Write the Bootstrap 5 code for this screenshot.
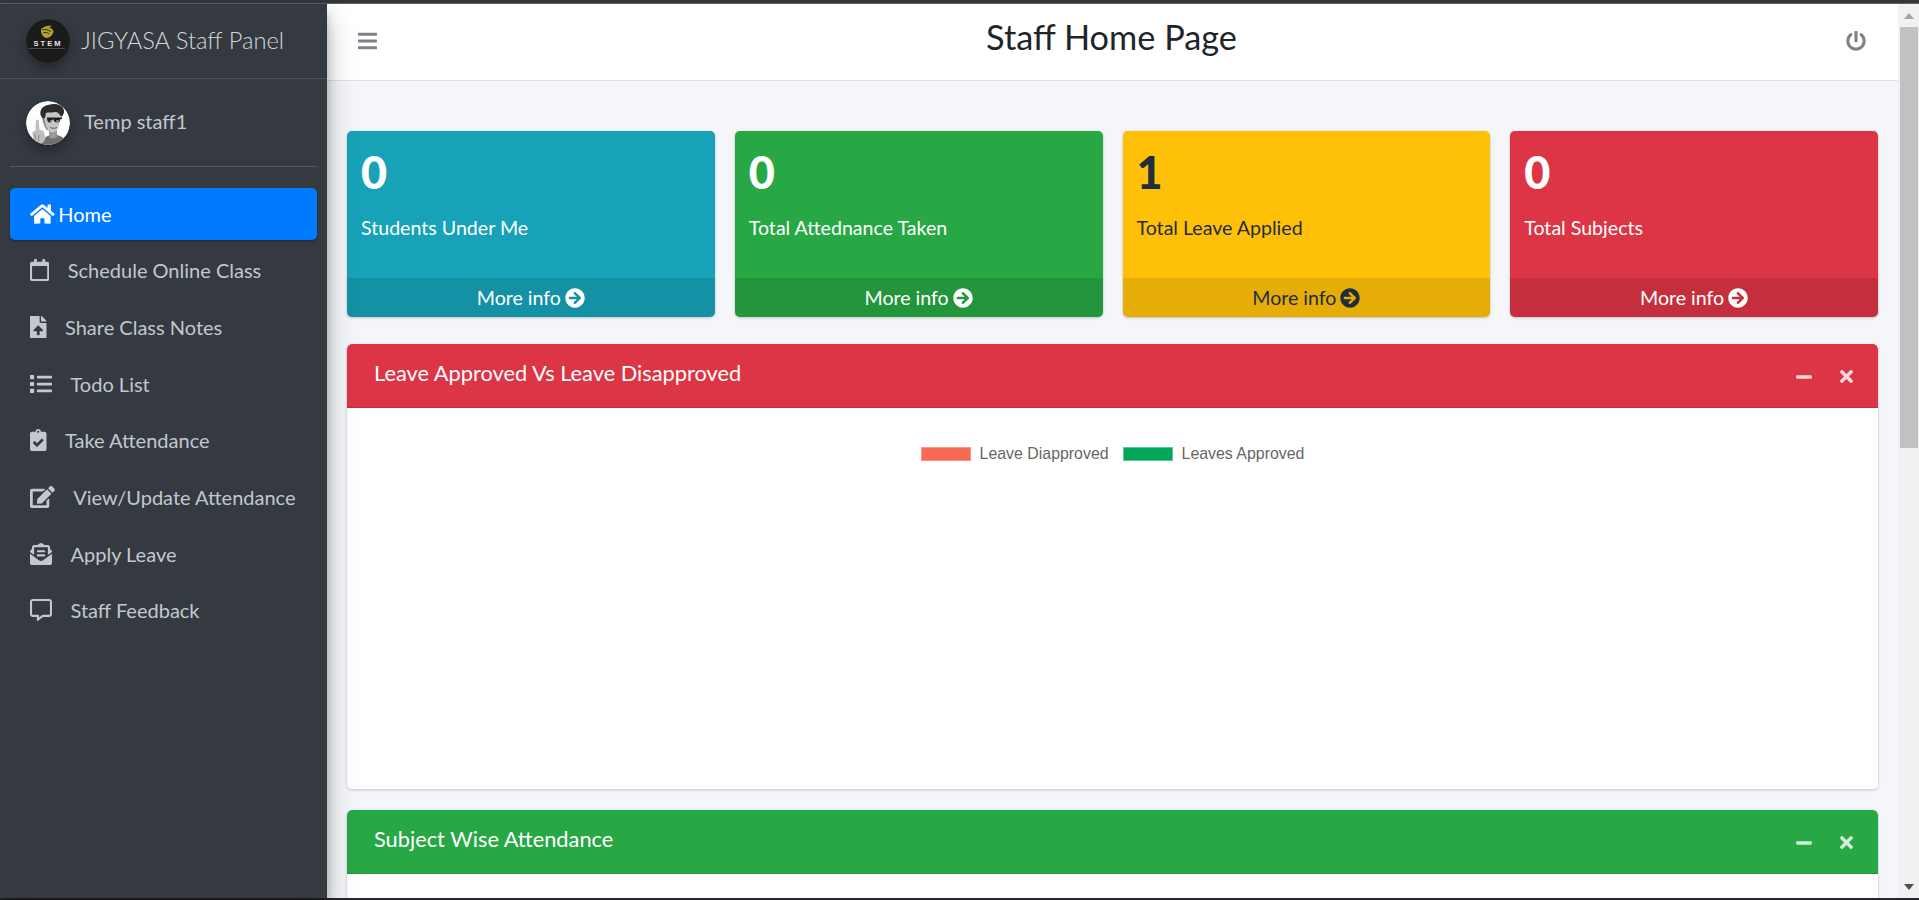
<!DOCTYPE html>
<html lang="en">
  <head>
    <meta charset="UTF-8" />
    <meta name="viewport" content="width=device-width, initial-scale=1.0" />
    <title>Staff Home Page</title>
    <link rel="stylesheet" href="https://cdn.jsdelivr.net/npm/bootstrap@5.3.0/dist/css/bootstrap.min.css" />
    <style>
      html, body { height: 100%; }
      body {
        font-family: "Lato", "Noto Sans", sans-serif;
        background: #f4f6f9;
        color: #212529;
        overflow: hidden;
      }
      .win-top { height: 3px; background: #33363b; border-bottom: 1px solid #5c5f63; box-sizing: content-box; flex: none; }
      .win-bottom { height: 2px; background: #26282b; flex: none; }
      .win-body { min-height: 0; }

      /* sidebar */
      .side {
        width: 327px; flex: none; background: #343a40; position: relative; z-index: 5;
        box-shadow: 0 14px 28px rgba(0,0,0,.25), 0 10px 10px rgba(0,0,0,.22);
      }
      .side-brand { height: 75px; padding-left: 26px; border-bottom: 1px solid #4b545c; }
      .side-brand-text { font-size: 23.7px; font-weight: 300; color: rgba(255,255,255,.8); margin-left: 11px; }
      .logo-round { width: 44px; height: 44px; flex: none; border-radius: 50%; box-shadow: 0 6px 12px rgba(0,0,0,.3); }
      .side-user { height: 88px; margin: 0 10px; padding-left: 16px; border-bottom: 1px solid #4f5962; }
      .side-user-name { font-size: 20px; color: #c2c7d0; margin: 0 0 4px 14px; }
      .side-nav { padding: 21px 10px 0; gap: 4.7px; --bs-nav-pills-border-radius: 5px; --bs-nav-pills-link-active-bg: #007bff; }
      .side-link {
        height: 52px; padding: 0 0 1px 20px; color: #c2c7d0; font-size: 20px;
        display: flex; align-items: center; gap: 18.5px;
      }
      .side-link:hover { color: #c2c7d0; }
      .side-link.active { gap: 3.5px; box-shadow: 0 1px 3px rgba(0,0,0,.12), 0 1px 2px rgba(0,0,0,.24); }
      .side-link svg { height: 22px; width: auto; fill: currentColor; flex: none; }

      /* top bar */
      .top-bar { height: 77px; background: #fff; border-bottom: 1px solid #dee2e6; padding: 0 32px 2px 31px; flex: none; }
      .top-bar svg { fill: #7c8287; }
      .top-bars { height: 22px; width: 19px; }
      .top-power { height: 20px; width: 20px; }
      .page-title { font-size: 34.300px; font-weight: 400; margin: 0 0 8px; line-height: 1; color: #212529; }

      /* content */
      .main-col { min-width: 0; overflow: hidden; }
      .page-body { padding: 50px 20px 0; }
      .stat-row { --bs-gutter-x: 20px; margin-bottom: 27px; }
      .stat-card { height: 186px; border: 0; border-radius: 5px; box-shadow: 0 0 1px rgba(0,0,0,.125), 0 1px 3px rgba(0,0,0,.2); overflow: hidden; }
      .stat-card .card-body { padding: 14px 14px 0; }
      .stat-num { font-size: 45px; font-weight: 900; line-height: 54px; margin: 0 0 14px; }
      .stat-label { font-size: 19.600px; margin: 0; line-height: 30px; }
      .stat-foot {
        height: 39px; padding: 0; border: 0; border-radius: 0; background: rgba(0,0,0,.1);
        font-size: 19.600px; display: flex; align-items: center; justify-content: center; gap: 4px;
      }
      .stat-foot svg { width: 20px; height: 20px; fill: currentColor; }
      .bg-teal { background: #17a2b8; color: #fff; }
      .bg-grass { background: #28a745; color: #fff; }
      .bg-amber { background: #ffc107; color: #1f2d3d; }
      .bg-rose { background: #dc3545; color: #fff; }
      .bg-amber .stat-foot { color: #1f2d3d; }

      .panel { border: 0; border-radius: 5px; box-shadow: 0 0 1px rgba(0,0,0,.125), 0 1px 3px rgba(0,0,0,.2); margin-bottom: 21px; overflow: hidden; }
      .panel-head { height: 64px; padding: 0 25px 4px 27px; border: 0; border-bottom: 1px solid rgba(0,0,0,.125); border-radius: 0; }
      .panel-title { font-size: 21.800px; font-weight: 400; margin: 0; }
      .panel-tools { gap: 28px; margin-top: 6px; }
      .panel-tools svg { fill: rgba(255,255,255,.8); }
      .tool-minus { width: 16px; height: 18px; }
      .tool-close { width: 13px; height: 19px; }
      .panel-body-chart { height: 381px; background: #fff; padding: 37px 0 0; }
      .legend-line { font-family: "Liberation Sans", Arial, sans-serif; font-size: 15.900px; color: #666; gap: 14px; line-height: 17px; }
      .legend-swatch { width: 50px; height: 14px; margin-right: 9px; }
      .swatch-red { background: #f96a55; border: 1px solid #fb9384; }
      .swatch-green { background: #00a65a; border: 1px solid #5cc998; }

      /* window scrollbar */
      .scroll-col { width: 21px; flex: none; background: #f1f1f1; padding: 0 1px 0 2px; }
      .scroll-btn { height: 23px; flex: none; }
      .scroll-btn svg { width: 10px; height: 6px; }
      .scroll-thumb { height: 421px; background: #c1c1c1; flex: none; }
      .scroll-gap { flex: 1; }
    </style>
  </head>
  <body class="d-flex flex-column">
    <div class="win-top"></div>
    <div class="win-body d-flex flex-grow-1">
      <!-- sidebar -->
      <aside class="side">
        <div class="side-brand d-flex align-items-center">
          <svg class="logo-round" viewBox="0 0 44 44" role="img" aria-label="STEM logo">
            <circle cx="22" cy="22" r="22" fill="#1b1b1b" />
            <path d="M15 10c3-3 8-4 11-3l-3 1.500c2 .5 4 2 4.500 4-.5 3-3 6-7 6.500-3-.5-6-4-5.500-8.500z" fill="#b0a62e" />
            <path d="M16 11c3-1 7-.5 9 2M17 14c2-1 5-.5 6 1" stroke="#1b1b1b" stroke-width=".9" fill="none" />
            <text x="21" y="27" text-anchor="middle" font-family="Liberation Sans, sans-serif" font-size="7.500" font-weight="700" fill="#e4e4e4" textLength="27">STEM</text>
            <rect x="3" y="29" width="36" height="1" fill="#4d4d4d" />
          </svg>
          <span class="side-brand-text">JIGYASA Staff Panel</span>
        </div>
        <div class="side-user d-flex align-items-center">
          <svg class="logo-round" viewBox="0 0 44 44" role="img" aria-label="Temp staff1">
            <clipPath id="face-clip"><circle cx="22" cy="22" r="22" /></clipPath>
            <g clip-path="url(#face-clip)">
              <rect width="44" height="44" fill="#fdfdfd" />
              <path d="M14 44c1-6 6-9 11-10 6-1 11 1 15 5l1 5z" fill="#707070" />
              <path d="M23 27h8v9c-2 2-6 2-8 0z" fill="#9a9a9a" />
              <path d="M18 11h16c1 6 0 13-3 18-2 3-6 3-8 1-3-4-5-12-5-19z" fill="#c6c6c6" />
              <path d="M18 11c0 7 2 15 5 19l-2-1c-3-3-5-10-5-16z" fill="#8a8a8a" />
              <path d="M15 15c-2-5 1-10 7-11 6-2 13-1 15 3 2 3 1 7-2 9-1-3-3-5-6-5-3 1-7 0-9 1l-1 5c-1 1-3 0-4-2z" fill="#2c2c2c" />
              <path d="M21 16.500h15v1.500h-1.500c-.5 2.500-1.500 3.500-3.500 3.500s-3-1-3.500-3h-1c-.5 2-1.500 3-3 3-1.500 0-2.500-1.500-2.500-5z" fill="#1f1f1f" />
              <path d="M24 20h2.500M30 20h3" stroke="#cfcfcf" stroke-width="1" fill="none" />
              <path d="M24 26.500c2 1 5 1 7 0" stroke="#5c5c5c" fill="none" />
              <path d="M10 19l2.500-.5 1 10 4 1.500 2 7c-1 5-6 7-9 5-3-2-4-7-4-11l3-1.500z" fill="#bfbfbf" />
              <path d="M13 34c-.5 2-.5 4 0 6M9 33c0 2 0 4 1 6" stroke="#6e6e6e" stroke-width=".7" fill="none" />
            </g>
          </svg>
          <span class="side-user-name">Temp staff1</span>
        </div>
        <ul class="nav nav-pills flex-column side-nav">
          <li class="nav-item">
            <a class="nav-link active side-link" href="#">
              <svg viewBox="0 0 576 512"><path d="M280.37 148.26L96 300.11V464a16 16 0 0 0 16 16l112.06-.29a16 16 0 0 0 15.92-16V368a16 16 0 0 1 16-16h64a16 16 0 0 1 16 16v95.64a16 16 0 0 0 16 16.05L464 480a16 16 0 0 0 16-16V300L295.67 148.26a12.19 12.19 0 0 0-15.3 0zM571.6 251.47L488 182.56V44.05a12 12 0 0 0-12-12h-56a12 12 0 0 0-12 12v72.61L318.47 43a48 48 0 0 0-61 0L4.34 251.47a12 12 0 0 0-1.6 16.9l25.5 31A12 12 0 0 0 45.15 301l235.22-193.74a12.19 12.19 0 0 1 15.3 0L530.9 301a12 12 0 0 0 16.9-1.6l25.5-31a12 12 0 0 0-1.7-16.93z"/></svg>
              Home
            </a>
          </li>
          <li class="nav-item">
            <a class="nav-link side-link" href="#">
              <svg viewBox="0 0 448 512"><path d="M400 64h-48V12c0-6.6-5.400-12-12-12h-40c-6.600 0-12 5.400-12 12v52H160V12c0-6.600-5.400-12-12-12h-40c-6.600 0-12 5.400-12 12v52H48C21.500 64 0 85.500 0 112v352c0 26.500 21.500 48 48 48h352c26.500 0 48-21.500 48-48V112c0-26.500-21.500-48-48-48zm-6 400H54c-3.300 0-6-2.700-6-6V160h352v298c0 3.300-2.700 6-6 6z"/></svg>
              Schedule Online Class
            </a>
          </li>
          <li class="nav-item">
            <a class="nav-link side-link" href="#">
              <svg viewBox="0 0 384 512"><path d="M224 136V0H24C10.700 0 0 10.700 0 24v464c0 13.300 10.700 24 24 24h336c13.300 0 24-10.700 24-24V160H248c-13.200 0-24-10.800-24-24zm65.180 216.010H224v80c0 8.840-7.160 16-16 16h-32c-8.840 0-16-7.160-16-16v-80H94.820c-14.280 0-21.410-17.290-11.270-27.360l96.420-95.700c6.650-6.610 17.390-6.610 24.040 0l96.420 95.700c10.150 10.070 3.030 27.360-11.250 27.360zM377 105L279.100 7c-4.500-4.500-10.600-7-17-7H256v128h128v-6.100c0-6.300-2.500-12.400-7-16.900z"/></svg>
              Share Class Notes
            </a>
          </li>
          <li class="nav-item">
            <a class="nav-link side-link" href="#">
              <svg viewBox="0 0 512 512"><path d="M80 368H16a16 16 0 0 0-16 16v64a16 16 0 0 0 16 16h64a16 16 0 0 0 16-16v-64a16 16 0 0 0-16-16zm0-320H16A16 16 0 0 0 0 64v64a16 16 0 0 0 16 16h64a16 16 0 0 0 16-16V64a16 16 0 0 0-16-16zm0 160H16a16 16 0 0 0-16 16v64a16 16 0 0 0 16 16h64a16 16 0 0 0 16-16v-64a16 16 0 0 0-16-16zm416 176H176a16 16 0 0 0-16 16v32a16 16 0 0 0 16 16h320a16 16 0 0 0 16-16v-32a16 16 0 0 0-16-16zm0-320H176a16 16 0 0 0-16 16v32a16 16 0 0 0 16 16h320a16 16 0 0 0 16-16V80a16 16 0 0 0-16-16zm0 160H176a16 16 0 0 0-16 16v32a16 16 0 0 0 16 16h320a16 16 0 0 0 16-16v-32a16 16 0 0 0-16-16z"/></svg>
              Todo List
            </a>
          </li>
          <li class="nav-item">
            <a class="nav-link side-link" href="#">
              <svg viewBox="0 0 384 512"><path d="M336 64h-80c0-35.300-28.700-64-64-64s-64 28.700-64 64H48C21.500 64 0 85.500 0 112v352c0 26.500 21.500 48 48 48h288c26.500 0 48-21.500 48-48V112c0-26.500-21.500-48-48-48zM192 40c13.300 0 24 10.700 24 24s-10.700 24-24 24-24-10.700-24-24 10.700-24 24-24zm121.200 231.800l-143 141.800c-4.700 4.700-12.300 4.600-17-.1l-82.600-83.300c-4.700-4.700-4.600-12.300.1-17L99.100 285c4.700-4.700 12.300-4.600 17 .1l46 46.400 106-105.200c4.700-4.700 12.300-4.600 17 .1l28.200 28.400c4.700 4.800 4.600 12.300-.1 17z"/></svg>
              Take Attendance
            </a>
          </li>
          <li class="nav-item">
            <a class="nav-link side-link" href="#">
              <svg viewBox="0 0 576 512"><path d="M402.600 83.200l90.200 90.200c3.800 3.800 3.800 10 0 13.800L274.400 405.600l-92.800 10.300c-12.400 1.400-22.900-9.100-21.500-21.500l10.300-92.800L388.800 83.200c3.800-3.800 10-3.800 13.800 0zm162-22.900l-48.800-48.800c-15.200-15.200-39.900-15.200-55.200 0l-35.400 35.400c-3.800 3.800-3.800 10 0 13.800l90.200 90.200c3.800 3.800 10 3.800 13.800 0l35.400-35.400c15.200-15.300 15.200-40 0-55.200zM384 346.200V448H64V128h229.800c3.200 0 6.200-1.300 8.500-3.500l40-40c7.600-7.600 2.200-20.500-8.500-20.500H48C21.500 64 0 85.500 0 112v352c0 26.500 21.500 48 48 48h352c26.500 0 48-21.500 48-48V306.200c0-10.700-12.900-16-20.500-8.500l-40 40c-2.200 2.300-3.500 5.300-3.500 8.500z"/></svg>
              View/Update Attendance
            </a>
          </li>
          <li class="nav-item">
            <a class="nav-link side-link" href="#">
              <svg viewBox="0 0 512 512"><path d="M176 216h160c8.840 0 16-7.160 16-16v-16c0-8.840-7.160-16-16-16H176c-8.840 0-16 7.160-16 16v16c0 8.840 7.160 16 16 16zm-16 80c0 8.840 7.160 16 16 16h160c8.840 0 16-7.160 16-16v-16c0-8.840-7.160-16-16-16H176c-8.840 0-16 7.160-16 16v16zm96 121.130c-16.420 0-32.840-5.060-46.860-15.190L0 250.860V464c0 26.510 21.490 48 48 48h416c26.510 0 48-21.490 48-48V250.860L302.860 401.940c-14.020 10.120-30.440 15.190-46.860 15.190zm237.610-254.180c-8.850-6.940-17.240-13.470-29.610-22.810V96c0-26.510-21.490-48-48-48h-77.550c-3.040-2.200-5.870-4.260-9.040-6.560C312.600 29.170 279.200-.35 256 0c-23.200-.35-56.590 29.170-73.410 41.440-3.170 2.300-6 4.360-9.040 6.560H96c-26.510 0-48 21.490-48 48v44.140c-12.370 9.330-20.760 15.870-29.610 22.810A47.995 47.995 0 0 0 0 200.720v10.650l96 69.350V96h320v184.720l96-69.350v-10.650c0-14.740-6.780-28.670-18.390-37.770z"/></svg>
              Apply Leave
            </a>
          </li>
          <li class="nav-item">
            <a class="nav-link side-link" href="#">
              <svg viewBox="0 0 512 512"><path d="M448 0H64C28.700 0 0 28.700 0 64v288c0 35.300 28.700 64 64 64h96v84c0 7.100 5.800 12 12 12 2.400 0 4.900-.7 7.100-2.400L304 416h144c35.300 0 64-28.700 64-64V64c0-35.300-28.700-64-64-64zm16 352c0 8.800-7.200 16-16 16H288l-12.800 9.600L208 428v-60H64c-8.800 0-16-7.200-16-16V64c0-8.800 7.200-16 16-16h384c8.800 0 16 7.200 16 16v288z"/></svg>
              Staff Feedback
            </a>
          </li>
        </ul>
      </aside>

      <div class="main-col flex-grow-1 d-flex flex-column">
        <!-- top bar -->
        <header class="top-bar d-flex align-items-center justify-content-between">
          <svg class="top-bars" viewBox="0 0 448 512"><path d="M16 132h416c8.837 0 16-7.163 16-16V76c0-8.837-7.163-16-16-16H16C7.163 60 0 67.163 0 76v40c0 8.837 7.163 16 16 16zm0 160h416c8.837 0 16-7.163 16-16v-40c0-8.837-7.163-16-16-16H16c-8.837 0-16 7.163-16 16v40c0 8.837 7.163 16 16 16zm0 160h416c8.837 0 16-7.163 16-16v-40c0-8.837-7.163-16-16-16H16c-8.837 0-16 7.163-16 16v40c0 8.837 7.163 16 16 16z"/></svg>
          <h1 class="page-title">Staff Home Page</h1>
          <svg class="top-power" viewBox="0 0 512 512"><path d="M400 54.100c63 45 104 118.600 104 201.900 0 136.800-110.800 247.700-247.500 248C120 504.300 8.200 393 8 256.400 7.900 173.100 48.900 99.300 111.800 54.200c11.700-8.300 28-4.800 35 7.700L162.600 90c5.900 10.500 3.100 23.800-6.600 31-41.500 30.800-68 79.600-68 134.900-.1 92.300 74.500 168.100 168 168.100 91.600 0 168.600-74.200 168-169.100-.3-51.800-24.700-101.800-68.100-134-9.700-7.200-12.400-20.500-6.500-30.900l15.800-28.100c7-12.400 23.200-16.100 34.800-7.800zM296 264V24c0-13.300-10.700-24-24-24h-32c-13.300 0-24 10.700-24 24v240c0 13.300 10.700 24 24 24h32c13.300 0 24-10.700 24-24z"/></svg>
        </header>

        <main class="page-body">
          <!-- stat cards -->
          <div class="row stat-row">
            <div class="col-3">
              <div class="card stat-card bg-teal">
                <div class="card-body"><p class="stat-num">0</p><p class="stat-label">Students Under Me</p></div>
                <div class="card-footer stat-foot">More info <svg viewBox="0 0 512 512"><path d="M256 8c137 0 248 111 248 248S393 504 256 504 8 393 8 256 119 8 256 8zm-28.900 143.600l75.500 72.400H120c-13.300 0-24 10.700-24 24v16c0 13.300 10.700 24 24 24h182.600l-75.500 72.400c-9.700 9.300-9.900 24.800-.4 34.300l11 10.900c9.400 9.400 24.600 9.400 33.900 0L404.300 273c9.400-9.400 9.400-24.600 0-33.900L271.600 106.300c-9.400-9.400-24.600-9.400-33.900 0l-11 10.900c-9.500 9.600-9.300 25.100.4 34.400z"/></svg></div>
              </div>
            </div>
            <div class="col-3">
              <div class="card stat-card bg-grass">
                <div class="card-body"><p class="stat-num">0</p><p class="stat-label">Total Attednance Taken</p></div>
                <div class="card-footer stat-foot">More info <svg viewBox="0 0 512 512"><path d="M256 8c137 0 248 111 248 248S393 504 256 504 8 393 8 256 119 8 256 8zm-28.900 143.600l75.500 72.400H120c-13.300 0-24 10.700-24 24v16c0 13.300 10.700 24 24 24h182.600l-75.500 72.400c-9.700 9.300-9.900 24.800-.4 34.300l11 10.900c9.400 9.400 24.600 9.400 33.900 0L404.300 273c9.400-9.400 9.400-24.600 0-33.900L271.600 106.300c-9.400-9.400-24.600-9.400-33.900 0l-11 10.900c-9.500 9.600-9.300 25.100.4 34.400z"/></svg></div>
              </div>
            </div>
            <div class="col-3">
              <div class="card stat-card bg-amber">
                <div class="card-body"><p class="stat-num">1</p><p class="stat-label">Total Leave Applied</p></div>
                <div class="card-footer stat-foot">More info <svg viewBox="0 0 512 512"><path d="M256 8c137 0 248 111 248 248S393 504 256 504 8 393 8 256 119 8 256 8zm-28.900 143.600l75.500 72.400H120c-13.300 0-24 10.700-24 24v16c0 13.300 10.700 24 24 24h182.600l-75.500 72.400c-9.700 9.300-9.900 24.800-.4 34.300l11 10.900c9.400 9.400 24.600 9.400 33.900 0L404.300 273c9.400-9.400 9.400-24.600 0-33.900L271.600 106.300c-9.400-9.400-24.600-9.400-33.900 0l-11 10.900c-9.500 9.600-9.300 25.100.4 34.400z"/></svg></div>
              </div>
            </div>
            <div class="col-3">
              <div class="card stat-card bg-rose">
                <div class="card-body"><p class="stat-num">0</p><p class="stat-label">Total Subjects</p></div>
                <div class="card-footer stat-foot">More info <svg viewBox="0 0 512 512"><path d="M256 8c137 0 248 111 248 248S393 504 256 504 8 393 8 256 119 8 256 8zm-28.900 143.600l75.500 72.400H120c-13.300 0-24 10.700-24 24v16c0 13.300 10.700 24 24 24h182.600l-75.500 72.400c-9.700 9.300-9.900 24.800-.4 34.300l11 10.900c9.400 9.400 24.600 9.400 33.900 0L404.300 273c9.400-9.400 9.400-24.600 0-33.900L271.600 106.300c-9.400-9.400-24.600-9.400-33.900 0l-11 10.900c-9.500 9.600-9.300 25.100.4 34.400z"/></svg></div>
              </div>
            </div>
          </div>

          <!-- leave chart -->
          <div class="card panel">
            <div class="card-header panel-head bg-rose d-flex align-items-center justify-content-between">
              <h3 class="panel-title">Leave Approved Vs Leave Disapproved</h3>
              <div class="panel-tools d-flex align-items-center">
                <svg class="tool-minus" viewBox="0 0 448 512"><path d="M416 208H32c-17.670 0-32 14.330-32 32v32c0 17.670 14.330 32 32 32h384c17.670 0 32-14.330 32-32v-32c0-17.670-14.330-32-32-32z"/></svg>
                <svg class="tool-close" viewBox="0 0 352 512"><path d="M242.720 256l100.070-100.070c12.280-12.280 12.280-32.190 0-44.480l-22.240-22.240c-12.280-12.280-32.190-12.280-44.480 0L176 189.280 75.930 89.210c-12.280-12.280-32.190-12.280-44.480 0L9.210 111.450c-12.280 12.280-12.280 32.190 0 44.480L109.280 256 9.210 356.070c-12.280 12.280-12.280 32.190 0 44.480l22.240 22.240c12.280 12.280 32.200 12.280 44.480 0L176 322.720l100.070 100.070c12.280 12.280 32.200 12.280 44.480 0l22.240-22.240c12.280-12.280 12.280-32.190 0-44.480L242.720 256z"/></svg>
              </div>
            </div>
            <div class="panel-body-chart">
              <div class="legend-line d-flex justify-content-center align-items-center">
                <span class="d-flex align-items-center"><span class="legend-swatch swatch-red"></span>Leave Diapproved</span>
                <span class="d-flex align-items-center"><span class="legend-swatch swatch-green"></span>Leaves Approved</span>
              </div>
            </div>
          </div>

          <!-- attendance chart -->
          <div class="card panel">
            <div class="card-header panel-head bg-grass d-flex align-items-center justify-content-between">
              <h3 class="panel-title">Subject Wise Attendance</h3>
              <div class="panel-tools d-flex align-items-center">
                <svg class="tool-minus" viewBox="0 0 448 512"><path d="M416 208H32c-17.670 0-32 14.330-32 32v32c0 17.670 14.330 32 32 32h384c17.670 0 32-14.330 32-32v-32c0-17.670-14.330-32-32-32z"/></svg>
                <svg class="tool-close" viewBox="0 0 352 512"><path d="M242.720 256l100.070-100.070c12.280-12.280 12.280-32.190 0-44.480l-22.240-22.240c-12.280-12.280-32.190-12.280-44.480 0L176 189.280 75.930 89.210c-12.280-12.280-32.190-12.280-44.480 0L9.210 111.450c-12.280 12.280-12.280 32.190 0 44.480L109.280 256 9.210 356.070c-12.280 12.280-12.280 32.190 0 44.480l22.240 22.240c12.280 12.280 32.200 12.280 44.480 0L176 322.720l100.070 100.070c12.280 12.280 32.200 12.280 44.480 0l22.240-22.240c12.280-12.280 12.280-32.190 0-44.480L242.720 256z"/></svg>
              </div>
            </div>
            <div class="panel-body-chart"></div>
          </div>
        </main>
      </div>

      <!-- window scrollbar -->
      <div class="scroll-col d-flex flex-column">
        <div class="scroll-btn d-flex align-items-center justify-content-center"><svg viewBox="0 0 10 6"><path d="M5 0l5 6H0z" fill="#a3a3a3"/></svg></div>
        <div class="scroll-thumb"></div>
        <div class="scroll-gap"></div>
        <div class="scroll-btn d-flex align-items-center justify-content-center"><svg viewBox="0 0 10 6"><path d="M0 0h10L5 6z" fill="#505050"/></svg></div>
      </div>
    </div>
    <div class="win-bottom"></div>
    <script src="https://cdn.jsdelivr.net/npm/bootstrap@5.3.0/dist/js/bootstrap.bundle.min.js"></script>
  </body>
</html>
